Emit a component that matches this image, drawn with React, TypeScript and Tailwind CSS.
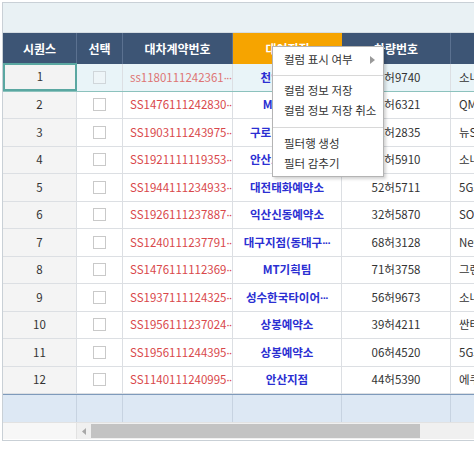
import React from 'react';

type Row = {
    seq: number;
    contract: string;
    branch: string;
    cut?: boolean;
    car: string;
    model: string;
};

const rows: Row[] = [
    {seq: 1, contract: 'ss1180111242361', branch: '천안아산점', car: '31허9740', model: '소나타'},
    {seq: 2, contract: 'SS1476111242830', branch: 'MT기획팀', car: '15허6321', model: 'QM6'},
    {seq: 3, contract: 'SS1903111243975', branch: '구로디지털지점', car: '22허2835', model: '뉴SM5'},
    {seq: 4, contract: 'SS1921111119353', branch: '안산고잔예약소', car: '47허5910', model: '소나타'},
    {seq: 5, contract: 'SS1944111234933', branch: '대전태화예약소', car: '52허5711', model: '5G그랜저'},
    {seq: 6, contract: 'SS1926111237887', branch: '익산신동예약소', car: '32허5870', model: 'SONATA'},
    {seq: 7, contract: 'SS1240111237791', branch: '대구지점(동대구', cut: true, car: '68허3128', model: 'New K5'},
    {seq: 8, contract: 'SS1476111112369', branch: 'MT기획팀', car: '71허3758', model: '그랜저'},
    {seq: 9, contract: 'SS1937111124325', branch: '성수한국타이어', cut: true, car: '56허9673', model: '소나타'},
    {seq: 10, contract: 'SS1956111237024', branch: '상봉예약소', car: '39허4211', model: '싼타페'},
    {seq: 11, contract: 'SS1956111244395', branch: '상봉예약소', car: '06허4520', model: '5G그랜저'},
    {seq: 12, contract: 'SS1140111240995', branch: '안산지점', car: '44허5390', model: '에쿠스'},
];

const font = {fontFamily: '"Noto Sans CJK KR", "Noto Sans", sans-serif'};

const Dots: React.FC = () => <span className="font-['Noto_Sans'] tracking-[-0.5px]">···</span>;

const ContextMenu: React.FC = () => (
    <div className="absolute left-[269px] top-[43px] w-[112px] bg-white border border-[#b4b4b4] shadow-[2px_2px_3px_rgba(0,0,0,0.18)] pt-[3px] pb-[2px] text-[11.5px] text-[#333]">
        <div className="h-[20px] flex items-center justify-between pl-[11px] pr-[8px]">
            <span>컬럼 표시 여부</span>
            <svg width="5" height="8" viewBox="0 0 5 8">
                <path d="M0 0 L5 4 L0 8 Z" fill="#9a9a9a" />
            </svg>
        </div>
        <div className="h-px bg-[#d8d8d8] my-[5px]" />
        <div className="h-[20px] flex items-center pl-[11px]">컬럼 정보 저장</div>
        <div className="h-[20px] flex items-center pl-[11px]">컬럼 정보 저장 취소</div>
        <div className="h-px bg-[#d8d8d8] my-[6px]" />
        <div className="h-[20px] flex items-center pl-[11px]">필터행 생성</div>
        <div className="h-[20px] flex items-center pl-[11px]">필터 감추기</div>
    </div>
);

const App: React.FC = () => {
    return (
        <div className="w-[474px] h-[449px] bg-white overflow-hidden pt-[2px] pl-[2px]" style={font}>
            <div className="relative w-[480px] h-[439px] border-l border-t border-b border-[#c9d0d6] overflow-hidden">
                {/* toolbar area */}
                <div className="h-[30px] bg-[#e9f1f4] border-b border-[#d5dde2]" />

                {/* header */}
                <div className="flex h-[31px] bg-[#3d5575] text-white text-[12px] font-bold">
                    <div className="w-[74px] shrink-0 flex items-center justify-center border-r border-[#5b7190]">시퀀스</div>
                    <div className="w-[46px] shrink-0 flex items-center justify-center border-r border-[#5b7190]">선택</div>
                    <div className="w-[110px] shrink-0 flex items-center justify-center border-r border-[#5b7190]">대차계약번호</div>
                    <div className="w-[109px] shrink-0 flex items-center justify-center bg-[#f6a400]">대여지점</div>
                    <div className="w-[109px] shrink-0 flex items-center justify-center border-r border-[#5b7190]">차량번호</div>
                    <div className="w-[100px] shrink-0" />
                </div>

                {/* body */}
                <div className="text-[11.5px]">
                    {rows.map((r) => {
                        const sel = r.seq === 1;
                        return (
                            <div
                                key={r.seq}
                                className={
                                    sel
                                        ? 'flex h-[27.5px] bg-[#e9f4f8] border-b border-[#8cc2bd]'
                                        : 'flex h-[27.5px] bg-white border-b border-[#dcdfe3]'
                                }
                            >
                                <div
                                    className={
                                        sel
                                            ? 'w-[74px] shrink-0 flex items-center justify-center bg-[#f3f3f3] text-[#333] border-2 border-[#5aa7a1] -mt-px'
                                            : 'w-[74px] shrink-0 flex items-center justify-center bg-[#f4f4f4] text-[#333] border-r border-[#dcdfe3]'
                                    }
                                >
                                    {r.seq}
                                </div>
                                <div className="w-[46px] shrink-0 flex items-center justify-center border-r border-[#dcdfe3]">
                                    <div
                                        className={
                                            sel
                                                ? 'w-[13px] h-[13px] border border-[#d0d6da] bg-[#eef5f8]'
                                                : 'w-[13px] h-[13px] border border-[#c9c9c9] bg-white'
                                        }
                                    />
                                </div>
                                <div
                                    className={
                                        sel
                                            ? 'w-[110px] shrink-0 flex items-center overflow-hidden whitespace-nowrap border-r border-[#dcdfe3] pl-[7px] text-[#de7474]'
                                            : 'w-[110px] shrink-0 flex items-center overflow-hidden whitespace-nowrap border-r border-[#dcdfe3] pl-[7px] text-[#d9484b]'
                                    }
                                >
                                    {r.contract}
                                    <Dots />
                                </div>
                                <div className="w-[109px] shrink-0 flex items-center justify-center overflow-hidden whitespace-nowrap border-r border-[#dcdfe3] text-[#2b2fd2] font-semibold">
                                    {r.branch}
                                    {r.cut && <Dots />}
                                </div>
                                <div className="w-[109px] shrink-0 flex items-center justify-center border-r border-[#dcdfe3] text-[#333]">
                                    {r.car}
                                </div>
                                <div className="w-[100px] shrink-0 flex items-center pl-[8px] text-[#333]">{r.model}</div>
                            </div>
                        );
                    })}
                </div>

                {/* summary row */}
                <div className="flex h-[28px] bg-[#dde8f4] border-t border-[#7e9abb]">
                    <div className="w-[74px] shrink-0 border-r border-[#c7d3e1]" />
                    <div className="w-[46px] shrink-0 border-r border-[#c7d3e1]" />
                    <div className="w-[110px] shrink-0 border-r border-[#c7d3e1]" />
                    <div className="w-[109px] shrink-0 border-r border-[#c7d3e1]" />
                    <div className="w-[109px] shrink-0 border-r border-[#c7d3e1]" />
                    <div className="w-[100px] shrink-0" />
                </div>

                {/* scrollbar */}
                <div className="flex h-[17px] bg-[#f0f0f0] border-t border-[#e2e2e2]">
                    <div className="w-[74px] shrink-0 bg-[#f7f7f7] border-r border-[#e2e2e2]" />
                    <div className="w-[14px] shrink-0 flex items-center justify-center">
                        <svg width="4" height="7" viewBox="0 0 4 7">
                            <path d="M4 0 L0 3.5 L4 7 Z" fill="#a8a8a8" />
                        </svg>
                    </div>
                    <div className="w-[329px] shrink-0 my-[1px] bg-[#c3c3c3]" />
                </div>

                <ContextMenu />
            </div>
        </div>
    );
};

export default App;
